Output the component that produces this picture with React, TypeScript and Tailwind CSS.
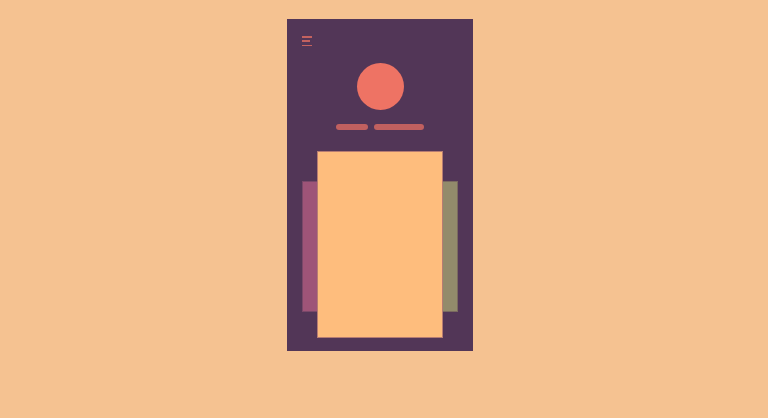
export default function App() {
  return (
    <div className="min-h-[418px] w-full bg-[#F5C291] pt-[19px] pl-[287px]">
      <div className="flex h-[332px] w-[186px] flex-col bg-[#523657] pt-[17px] pb-[13px]">
        {/* menu */}
        <div className="ml-[15px] flex h-[10px] flex-col justify-between">
          <span className="block h-[1.5px] w-[10px] bg-[#C4625F]" />
          <span className="block h-[1.5px] w-[8px] bg-[#C4625F]" />
          <span className="block h-[1.5px] w-[10px] bg-[#C4625F]" />
        </div>

        {/* avatar */}
        <div className="mx-auto mt-[17px] h-[47px] w-[47px] rounded-full bg-[#EE7364]" />

        {/* name bars */}
        <div className="mt-[14px] flex justify-center gap-[6px]">
          <span className="block h-[6px] w-[32px] rounded-full bg-[#C1605F]" />
          <span className="block h-[6px] w-[50px] rounded-full bg-[#C1605F]" />
        </div>

        {/* cards */}
        <div className="relative mt-[21px] flex justify-center">
          <div className="absolute top-[30px] left-[15px] h-[131px] w-[40px] border border-[#7a4869] bg-[#9E5478]" />
          <div className="absolute top-[30px] right-[15px] h-[131px] w-[40px] border border-[#7a6a60] bg-[#928B6B]" />
          <div className="relative h-[187px] w-[126px] border border-[#b67c72] bg-[#FEBD7D]" />
        </div>
      </div>
    </div>
  );
}
